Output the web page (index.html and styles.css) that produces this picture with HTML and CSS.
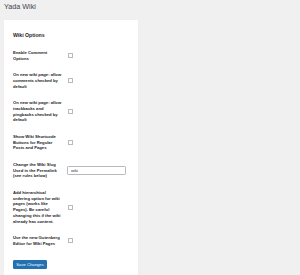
FILE: index.html
```html
<!DOCTYPE html>
<html lang="en">
<head>
    <meta charset="UTF-8">
    <meta name="viewport" content="width=device-width, initial-scale=1.0">
    <title>Yada Wiki</title>
    <link rel="stylesheet" href="styles.css">
</head>
<body>
    <div class="wrap">
        <h1>Yada Wiki</h1>

        <form class="panel">
            <h2>Wiki Options</h2>

            <div class="option">
                <label for="opt-comments">Enable Comment Options</label>
                <div class="field"><input type="checkbox" id="opt-comments"></div>
            </div>
            <div class="option">
                <label for="opt-comment-default">On new wiki page: allow comments checked by default</label>
                <div class="field"><input type="checkbox" id="opt-comment-default"></div>
            </div>
            <div class="option">
                <label for="opt-ping-default">On new wiki page: allow trackbacks and pingbacks checked by default</label>
                <div class="field"><input type="checkbox" id="opt-ping-default"></div>
            </div>
            <div class="option">
                <label for="opt-shortcode">Show Wiki Shortcode Buttons for Regular Posts and Pages</label>
                <div class="field"><input type="checkbox" id="opt-shortcode"></div>
            </div>
            <div class="option">
                <label for="opt-slug">Change the Wiki Slug Used in the Permalink (see rules below)</label>
                <div class="field"><input type="text" id="opt-slug" class="text-input" value="wiki"></div>
            </div>
            <div class="option">
                <label for="opt-hierarchy">Add hierarchical ordering option for wiki pages (works like Pages). Be careful changing this if the wiki already has content.</label>
                <div class="field"><input type="checkbox" id="opt-hierarchy"></div>
            </div>
            <div class="option">
                <label for="opt-gutenberg">Use the new Gutenberg Editor for Wiki Pages</label>
                <div class="field"><input type="checkbox" id="opt-gutenberg"></div>
            </div>

            <button type="button" class="button-primary">Save Changes</button>
        </form>
    </div>
</body>
</html>
```

FILE: styles.css
```css
body, html {
    margin: 0;
    padding: 0;
    width: 100%;
    height: 100%;
    font-family: 'Liberation Sans', Arial, sans-serif;
    background-color: #f0f0f1;
    color: #1d2327;
}
.wrap {
    padding: 0 4px;
}
h1 {
    margin: 0;
    padding-top: 2px;
    font-size: 7.2px;
    line-height: 9px;
    font-weight: 400;
    color: #3c434a;
    height: 18px;
}
.panel {
    background-color: #fff;
    width: 125px;
    padding: 12px 0 6px 9px;
    box-shadow: 0 0 2px rgba(0, 0, 0, 0.03);
}
h2 {
    margin: 0 0 6.6px;
    font-size: 5.2px;
    line-height: 6px;
    font-weight: 600;
}
.option {
    display: flex;
    align-items: center;
    padding: 5.3px 0;
}
.option label {
    width: 49.5px;
    flex-shrink: 0;
    font-size: 4.2px;
    line-height: 5.8px;
    font-weight: 600;
}
.field {
    padding-left: 5px;
    display: flex;
    align-items: center;
}
input[type="checkbox"] {
    appearance: none;
    -webkit-appearance: none;
    box-sizing: border-box;
    margin: 0;
    width: 5px;
    height: 5px;
    border: 0.5px solid #b7b9bd;
    border-radius: 0.5px;
    background: #fff;
}
.text-input {
    box-sizing: border-box;
    margin: 0 0 0 -0.5px;
    width: 59px;
    height: 8.8px;
    padding: 0 3px;
    font-family: inherit;
    font-size: 4.2px;
    color: #2c3338;
    border: 0.5px solid #b7b9bd;
    border-radius: 1.2px;
    background: #fff;
    outline: none;
}
.button-primary {
    margin-top: 6.5px;
    height: 8.6px;
    padding: 0 2.3px;
    font-family: inherit;
    font-size: 4.2px;
    line-height: 8.6px;
    color: #fff;
    background-color: #2271b1;
    border: 0.3px solid #2271b1;
    border-radius: 1px;
    cursor: pointer;
}
```
